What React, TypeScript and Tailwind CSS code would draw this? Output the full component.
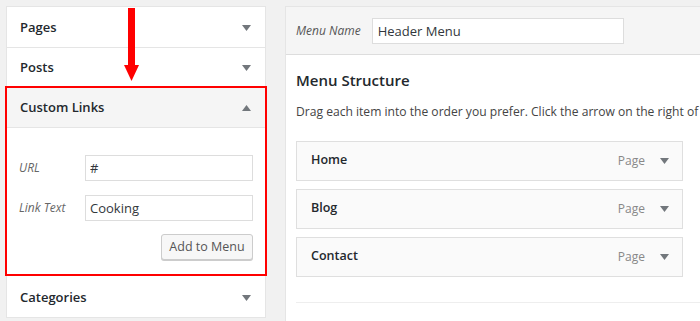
import React from 'react';

const Caret = ({ up = false }: { up?: boolean }) => (
    <svg width="9" height="6" viewBox="0 0 9 6" className="shrink-0">
        {up ? <path d="M0 6 L4.5 0 L9 6 Z" fill="#72777c" /> : <path d="M0 0 L9 0 L4.5 6 Z" fill="#72777c" />}
    </svg>
);

const SideRow = ({ title, up = false, gray = false }: { title: string; up?: boolean; gray?: boolean }) => (
    <div className={`h-[39px] flex items-center justify-between pl-[13px] pr-[14px] ${gray ? 'bg-[#f5f5f5]' : 'bg-white'}`}>
        <span className="text-[13px] font-semibold text-[#23282d]">{title}</span>
        <Caret up={up} />
    </div>
);

const MenuItem = ({ label }: { label: string }) => (
    <div className="h-[40px] flex items-center justify-between bg-[#fafafa] border border-[#dfdfdf] pl-[14px] pr-[13px]">
        <span className="text-[12.5px] font-semibold text-[#23282d]">{label}</span>
        <div className="flex items-center gap-[15px]">
            <span className="text-[12px] text-[#888]">Page</span>
            <Caret />
        </div>
    </div>
);

export default function App() {
    return (
        <div
            className="relative w-[700px] h-[321px] overflow-hidden bg-[#f1f1f1] flex items-start pt-[6px] pl-[6px] gap-[19px]"
            style={{ fontFamily: '"Open Sans", "Liberation Sans", sans-serif' }}
        >
            {/* left accordion */}
            <div className="w-[260px] shrink-0 bg-white border border-[#e5e5e5]">
                <div className="border-b border-[#e5e5e5] pt-[1px]">
                    <SideRow title="Pages" />
                </div>
                <div className="border-b border-[#e5e5e5]">
                    <SideRow title="Posts" />
                </div>
                <div className="outline-2 outline-solid outline-[#ff0000] relative z-10">
                    <div className="border-b border-[#e5e5e5]">
                        <SideRow title="Custom Links" up gray />
                    </div>
                    <div className="pt-[27px] pb-[14px] pl-[12px] pr-[12px] flex flex-col">
                        <div className="flex items-center">
                            <span className="w-[67px] italic text-[12px] text-[#666]">URL</span>
                            <input
                                readOnly
                                value="#"
                                className="w-[168px] h-[26px] border border-[#ddd] px-[4px] text-[13px] text-[#32373c] outline-none"
                            />
                        </div>
                        <div className="flex items-center mt-[14px]">
                            <span className="w-[67px] italic text-[12px] text-[#666]">Link Text</span>
                            <input
                                readOnly
                                value="Cooking"
                                className="w-[168px] h-[26px] border border-[#ddd] px-[4px] text-[13px] text-[#32373c] outline-none"
                            />
                        </div>
                        <div className="flex justify-end mt-[13px]">
                            <button className="h-[26px] w-[92px] border border-[#ccc] rounded-[3px] bg-[#f7f7f7] text-[12.5px] text-[#555] shadow-[0_1px_0_#ccc]">
                                Add to Menu
                            </button>
                        </div>
                    </div>
                </div>
                <div className="mt-[3px] pt-[1px]">
                    <SideRow title="Categories" />
                </div>
            </div>

            {/* right menu editor */}
            <div className="flex-1 h-[330px] bg-white border-l border-t border-[#e5e5e5]">
                <div className="h-[48px] bg-[#f5f5f5] border-b border-[#dddddd] flex items-center pl-[10px] gap-[11px]">
                    <span className="italic text-[12px] text-[#555]">Menu Name</span>
                    <input
                        readOnly
                        value="Header Menu"
                        className="w-[252px] h-[26px] bg-white border border-[#ddd] px-[5px] text-[13px] text-[#32373c] outline-none"
                    />
                </div>
                <div className="pl-[10px]">
                    <h3 className="mt-[14px] text-[15px] font-semibold text-[#23282d]">Menu Structure</h3>
                    <p className="mt-[11px] text-[12.1px] text-[#444] whitespace-nowrap">
                        Drag each item into the order you prefer. Click the arrow on the right of the item to reveal additional configuration options.
                    </p>
                    <div className="mt-[20px] w-[387px] flex flex-col gap-[8px]">
                        <MenuItem label="Home" />
                        <MenuItem label="Blog" />
                        <MenuItem label="Contact" />
                    </div>
                    <div className="mt-[25px] border-t border-[#eeeeee]" />
                </div>
            </div>

            {/* red pointer arrow */}
            <svg className="absolute left-[124px] top-[8px] z-20" width="16" height="74" viewBox="0 0 16 74">
                <rect x="4" y="0" width="7" height="58" fill="#ff0000" />
                <path d="M0 57 L15 57 L7.5 73 Z" fill="#ff0000" />
            </svg>
        </div>
    );
}
